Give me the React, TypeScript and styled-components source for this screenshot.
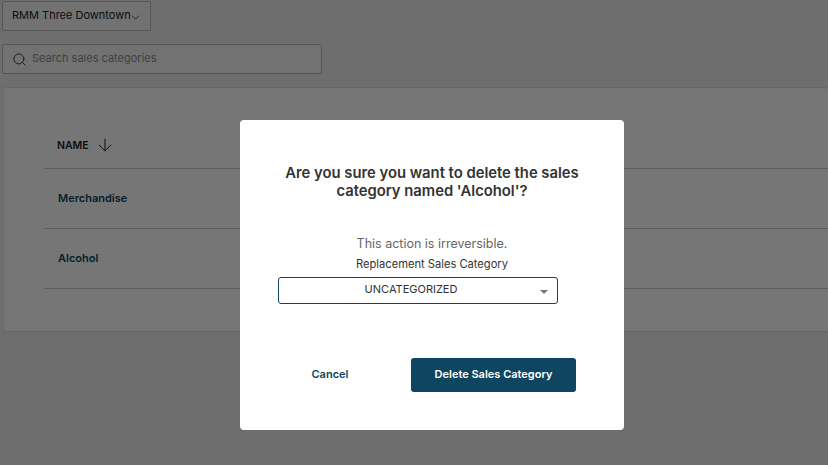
import styled, { createGlobalStyle } from "styled-components";
import { ArrowDown, ChevronDown, Search } from "lucide-react";

const categories = ["Merchandise", "Alcohol"];

function App() {
  return (
    <>
      <GlobalStyle />
      <Page>
        <LocationButton>
          RMM Three Downtown
          <LocationChevron size={13} strokeWidth={1.4} />
        </LocationButton>
        <SearchBox>
          <Search size={15} strokeWidth={1.5} />
          <SearchText>Search sales categories</SearchText>
        </SearchBox>
        <Card>
          <HeaderRow>
            NAME
            <ArrowDown size={20} strokeWidth={1.2} />
          </HeaderRow>
          {categories.map((name) => (
            <Row key={name}>{name}</Row>
          ))}
        </Card>
      </Page>
      <Overlay>
        <Modal>
          <Title>
            Are you sure you want to delete the sales category named 'Alcohol'?
          </Title>
          <Warning>This action is irreversible.</Warning>
          <FieldLabel>Replacement Sales Category</FieldLabel>
          <Select>
            UNCATEGORIZED
            <Caret />
          </Select>
          <Actions>
            <CancelButton>Cancel</CancelButton>
            <DeleteButton>Delete Sales Category</DeleteButton>
          </Actions>
        </Modal>
      </Overlay>
    </>
  );
}

export default App;

const GlobalStyle = createGlobalStyle`
  html, body {
    margin: 0;
    height: 100%;
    overflow: hidden;
    background: #fff;
    font-family: Inter, "Liberation Sans", sans-serif;
  }
`;

const Page = styled.main`
  height: 465px;
  padding: 0 0 0 2px;
  box-sizing: border-box;
  background: #e9e9e9;
  display: flex;
  flex-direction: column;
  align-items: flex-start;
`;

const LocationButton = styled.button`
  width: 149px;
  height: 30px;
  margin-top: 1px;
  padding: 0 0 2px 9px;
  display: flex;
  align-items: center;
  box-sizing: border-box;
  background: #f2f2f2;
  border: 1px solid #b8b8b8;
  border-radius: 2px;
  color: #222;
  font: 400 11px Inter, "Liberation Sans", sans-serif;
  white-space: nowrap;
`;

const LocationChevron = styled(ChevronDown)`
  flex: none;
  margin: 4px 0 0 -2px;
`;

const SearchBox = styled.div`
  width: 320px;
  height: 30px;
  margin-top: 13px;
  padding: 0 0 0 9px;
  display: flex;
  align-items: center;
  gap: 5px;
  box-sizing: border-box;
  background: #f2f2f2;
  border: 1px solid #b8b8b8;
  border-radius: 2px;
  color: #333;
`;

const SearchText = styled.span`
  margin-bottom: 2px;
  color: #8a8a8a;
  font-size: 11px;
`;

const Card = styled.section`
  align-self: stretch;
  height: 245px;
  margin-top: 13px;
  margin-left: 1px;
  padding: 28px 0 0 40px;
  box-sizing: border-box;
  background: #fbfbfb;
  border: 1px solid #dcdcdc;
  border-right: none;
  border-radius: 2px;
`;

const HeaderRow = styled.div`
  height: 53px;
  padding: 6px 0 0 13px;
  display: flex;
  align-items: center;
  gap: 6px;
  box-sizing: border-box;
  border-bottom: 1px solid #cacaca;
  color: #222;
  font-size: 10.5px;
  font-weight: 600;
`;

const Row = styled.div`
  height: 60px;
  padding: 0 0 2px 14px;
  display: flex;
  align-items: center;
  box-sizing: border-box;
  border-bottom: 1px solid #cacaca;
  color: #0e4560;
  font-size: 11px;
  font-weight: 600;
`;

const Overlay = styled.div`
  position: fixed;
  inset: 0;
  padding: 120px 0 0 240px;
  background: rgba(0, 0, 0, 0.53);
`;

const Modal = styled.div`
  width: 384px;
  height: 310px;
  padding-top: 44px;
  display: flex;
  flex-direction: column;
  align-items: center;
  box-sizing: border-box;
  background: #fff;
  border-radius: 4px;
`;

const Title = styled.h2`
  width: 310px;
  margin: 0;
  color: #333;
  font-size: 14.8px;
  font-weight: 600;
  line-height: 18px;
  text-align: center;
`;

const Warning = styled.p`
  margin: 36px 0 0;
  color: #666;
  font-size: 12.5px;
  line-height: 16px;
`;

const FieldLabel = styled.label`
  margin-top: 5px;
  color: #333;
  font-size: 11.15px;
  line-height: 14px;
`;

const Select = styled.div`
  position: relative;
  align-self: flex-start;
  width: 280px;
  height: 27px;
  margin: 6px 0 0 38px;
  padding: 0 14px 3px 0;
  display: flex;
  align-items: center;
  justify-content: center;
  flex: none;
  box-sizing: border-box;
  border: 1px solid #0e4560;
  border-radius: 3px;
  color: #333;
  font-size: 11px;
`;

const Caret = styled.span`
  position: absolute;
  right: 9px;
  top: 12px;
  border-left: 4px solid transparent;
  border-right: 4px solid transparent;
  border-top: 4px solid #777;
`;

const Actions = styled.div`
  align-self: flex-start;
  width: 298px;
  margin: 54px 0 0 38px;
  display: flex;
  align-items: center;
  justify-content: space-between;
`;

const CancelButton = styled.button`
  width: 104px;
  padding: 0 0 2px;
  background: none;
  border: none;
  color: #0e4560;
  font: 600 11px Inter, "Liberation Sans", sans-serif;
`;

const DeleteButton = styled.button`
  width: 165px;
  height: 34px;
  padding: 0 0 2px;
  background: #0e4560;
  border: none;
  border-radius: 3px;
  color: #fff;
  font: 600 11px Inter, "Liberation Sans", sans-serif;
`;
